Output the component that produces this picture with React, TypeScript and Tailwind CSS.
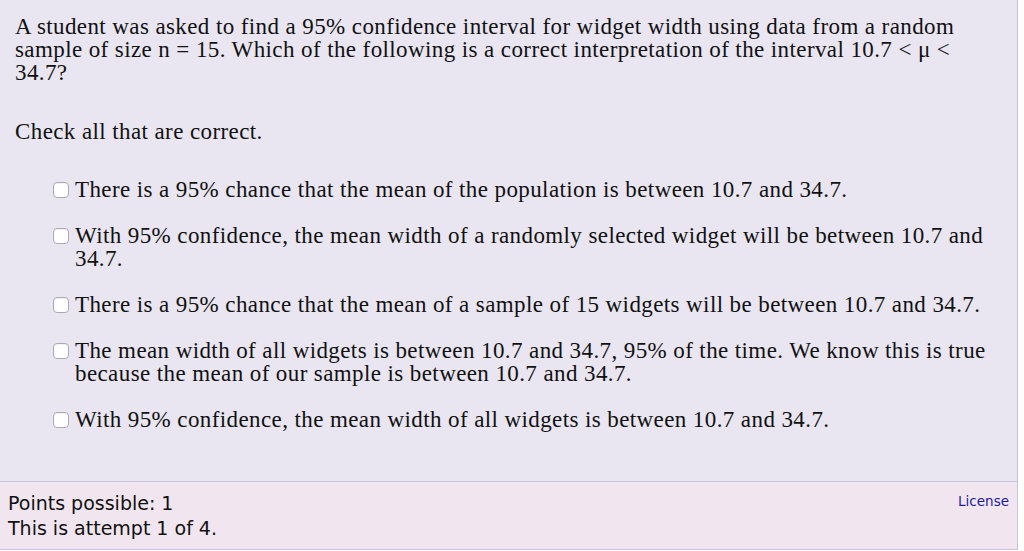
import React from "react";

// Question card + footer, one screen
const QUESTION = [
  "A student was asked to find a 95% confidence interval for widget width using data from a random",
  "sample of size n = 15. Which of the following is a correct interpretation of the interval 10.7 < μ <",
  "34.7?",
];

const OPTIONS: string[][] = [
  ["There is a 95% chance that the mean of the population is between 10.7 and 34.7."],
  [
    "With 95% confidence, the mean width of a randomly selected widget will be between 10.7 and",
    "34.7.",
  ],
  ["There is a 95% chance that the mean of a sample of 15 widgets will be between 10.7 and 34.7."],
  [
    "The mean width of all widgets is between 10.7 and 34.7, 95% of the time. We know this is true",
    "because the mean of our sample is between 10.7 and 34.7.",
  ],
  ["With 95% confidence, the mean width of all widgets is between 10.7 and 34.7."],
];

function Checkbox() {
  return (
    <span className="mt-[4px] h-[16px] w-[16px] shrink-0 rounded-[4px] border border-[#a9a9b4] bg-white shadow-[inset_0_1px_1px_rgba(0,0,0,0.06)]" />
  );
}

export default function App() {
  return (
    <div className="flex h-[551px] w-[1024px] flex-col bg-white">
      {/* ── Question body ─────────────────────────────────────────── */}
      <div className="h-[481px] w-[1018px] border-r border-[#c4c3df] bg-[#e9e6f2] pl-[15px] pt-[15px] font-['Liberation_Serif',serif] text-[23px] leading-[23px] tracking-[0.4px] text-[#111]">
        <p className="whitespace-nowrap">
          {QUESTION.map((l, i) => (
            <span key={i} className="block">
              {l}
            </span>
          ))}
        </p>

        <p className="mt-[36px]">Check all that are correct.</p>

        <div className="mt-[35px] flex flex-col gap-[23px] pl-[38px]">
          {OPTIONS.map((lines, i) => (
            <label key={i} className="flex items-start gap-[6px]">
              <Checkbox />
              <span className="whitespace-nowrap">
                {lines.map((l, j) => (
                  <span key={j} className="block">
                    {l}
                  </span>
                ))}
              </span>
            </label>
          ))}
        </div>
      </div>

      {/* ── Footer ───────────────────────────────────────────────── */}
      <div className="flex h-[69px] w-[1018px] items-start justify-between border-y border-r border-[#c4c3df] bg-[#f1e6ef] px-[8px] pt-[9px] font-['DejaVu_Sans',sans-serif]">
        <div className="text-[19px] leading-[25px] text-[#111]">
          <div>Points possible: 1</div>
          <div>This is attempt 1 of 4.</div>
        </div>
        <a className="mt-[1px] text-[13.5px] leading-[18px] text-[#1c1c9c]">License</a>
      </div>
    </div>
  );
}
